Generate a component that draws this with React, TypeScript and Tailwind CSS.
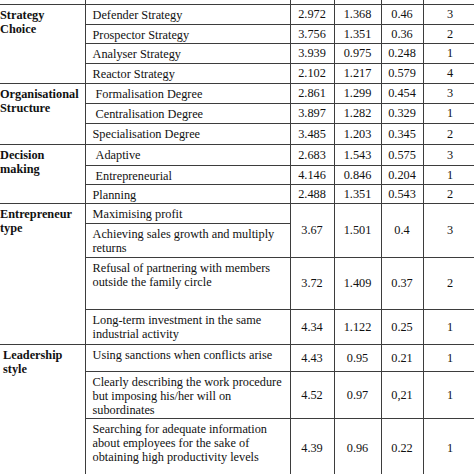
import React from "react";

const td = "border border-[#3d3d3d] p-0";

function ItemCell({ children, indent }: { children: React.ReactNode; indent?: boolean }) {
  return (
    <td className={`${td} align-top pt-[3px] leading-[14px] ${indent ? "pl-[10px]" : "pl-[7px]"}`}>
      {children}
    </td>
  );
}

function NumCells({ nums, span }: { nums: string[]; span?: number }) {
  return (
    <>
      {nums.map((n, i) => (
        <td key={i} rowSpan={span} className={`${td} text-center align-middle leading-[14px]`}>
          {n}
        </td>
      ))}
    </>
  );
}

function Cat({ lines, span, pl }: { lines: string[]; span: number; pl?: boolean }) {
  return (
    <td
      rowSpan={span}
      className={`${td} border-l-0 align-top font-bold pt-[3px] leading-[14.5px] ${pl ? "pl-[3px]" : "pl-0"}`}
    >
      {lines.map((l, i) => (
        <div key={i}>{l}</div>
      ))}
    </td>
  );
}

export default function App() {
  return (
    <div className="w-[474px] h-[474px] overflow-hidden bg-white">
      <table
        className="table-fixed border-collapse w-[477px] -mt-[1px] text-[12.3px] text-[#111111]"
        style={{ fontFamily: '"Liberation Serif", "Times New Roman", serif' }}
      >
        <colgroup>
          <col className="w-[85px]" />
          <col className="w-[205px]" />
          <col className="w-[44px]" />
          <col className="w-[47px]" />
          <col className="w-[42px]" />
          <col className="w-[54px]" />
        </colgroup>
        <tbody>
          <tr className="h-[5px]">
            <td className={`${td} border-l-0 border-t-0`}></td>
            <td className={`${td} border-t-0`}></td>
            <td className={`${td} border-t-0`}></td>
            <td className={`${td} border-t-0`}></td>
            <td className={`${td} border-t-0`}></td>
            <td className={`${td} border-t-0`}></td>
          </tr>

          <tr className="h-[20px]">
            <Cat lines={["Strategy", "Choice"]} span={4} />
            <ItemCell>Defender Strategy</ItemCell>
            <NumCells nums={["2.972", "1.368", "0.46", "3"]} />
          </tr>
          <tr className="h-[19px]">
            <ItemCell>Prospector Strategy</ItemCell>
            <NumCells nums={["3.756", "1.351", "0.36", "2"]} />
          </tr>
          <tr className="h-[20px]">
            <ItemCell>Analyser Strategy</ItemCell>
            <NumCells nums={["3.939", "0.975", "0.248", "1"]} />
          </tr>
          <tr className="h-[20px]">
            <ItemCell>Reactor Strategy</ItemCell>
            <NumCells nums={["2.102", "1.217", "0.579", "4"]} />
          </tr>

          <tr className="h-[20px]">
            <Cat lines={["Organisational", "Structure"]} span={3} />
            <ItemCell indent>Formalisation Degree</ItemCell>
            <NumCells nums={["2.861", "1.299", "0.454", "3"]} />
          </tr>
          <tr className="h-[20px]">
            <ItemCell indent>Centralisation Degree</ItemCell>
            <NumCells nums={["3.897", "1.282", "0.329", "1"]} />
          </tr>
          <tr className="h-[21px]">
            <ItemCell>Specialisation Degree</ItemCell>
            <NumCells nums={["3.485", "1.203", "0.345", "2"]} />
          </tr>

          <tr className="h-[21px]">
            <Cat lines={["Decision", "making"]} span={3} />
            <ItemCell indent>Adaptive</ItemCell>
            <NumCells nums={["2.683", "1.543", "0.575", "3"]} />
          </tr>
          <tr className="h-[19px]">
            <ItemCell indent>Entrepreneurial</ItemCell>
            <NumCells nums={["4.146", "0.846", "0.204", "1"]} />
          </tr>
          <tr className="h-[19px]">
            <ItemCell>Planning</ItemCell>
            <NumCells nums={["2.488", "1.351", "0.543", "2"]} />
          </tr>

          <tr className="h-[20px]">
            <Cat lines={["Entrepreneur", "type"]} span={4} />
            <ItemCell>Maximising profit</ItemCell>
            <NumCells nums={["3.67", "1.501", "0.4", "3"]} span={2} />
          </tr>
          <tr className="h-[34px]">
            <ItemCell>
              Achieving sales growth and multiply
              <br />
              returns
            </ItemCell>
          </tr>
          <tr className="h-[52px]">
            <ItemCell>
              Refusal of partnering with members
              <br />
              outside the family circle
            </ItemCell>
            <NumCells nums={["3.72", "1.409", "0.37", "2"]} />
          </tr>
          <tr className="h-[35px]">
            <ItemCell>
              Long-term investment in the same
              <br />
              industrial activity
            </ItemCell>
            <NumCells nums={["4.34", "1.122", "0.25", "1"]} />
          </tr>

          <tr className="h-[27px]">
            <Cat lines={["Leadership", "style"]} span={3} pl />
            <ItemCell>Using sanctions when conflicts arise</ItemCell>
            <NumCells nums={["4.43", "0.95", "0.21", "1"]} />
          </tr>
          <tr className="h-[47px]">
            <ItemCell>
              Clearly describing the work procedure
              <br />
              but imposing his/her will on
              <br />
              subordinates
            </ItemCell>
            <NumCells nums={["4.52", "0.97", "0,21", "1"]} />
          </tr>
          <tr className="h-[60px]">
            <ItemCell>
              Searching for adequate information
              <br />
              about employees for the sake of
              <br />
              obtaining high productivity levels
            </ItemCell>
            <NumCells nums={["4.39", "0.96", "0.22", "1"]} />
          </tr>
        </tbody>
      </table>
    </div>
  );
}
